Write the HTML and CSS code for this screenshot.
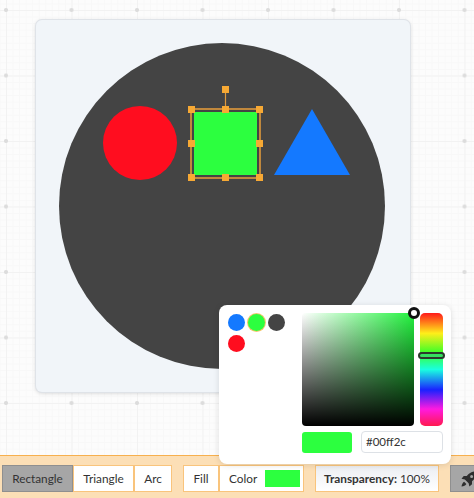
FILE: index.html
```html
<!DOCTYPE html>
<html lang="en">
<head>
<meta charset="utf-8">
<title>Shape editor</title>
<link rel="stylesheet" href="styles.css">
</head>
<body>
<main class="stage">
  <section class="card">
    <svg class="art" viewBox="0 0 374 372" width="374" height="372">
      <circle cx="186" cy="186" r="163" fill="#444444"/>
      <circle cx="104" cy="123" r="37" fill="#ff0d1f"/>
      <rect x="158" y="92" width="63" height="63" fill="#2cff3f"/>
      <polygon points="276,89 314,155 238,155" fill="#1479ff"/>
      <g class="handles">
        <rect class="frame" x="155" y="89" width="69" height="69"/>
        <line class="stem" x1="189.500" y1="69" x2="189.500" y2="89"/>
        <rect x="186" y="66" width="7" height="7"/>
        <rect x="152" y="86" width="7" height="7"/>
        <rect x="186" y="86" width="7" height="7"/>
        <rect x="220" y="86" width="7" height="7"/>
        <rect x="152" y="120" width="7" height="7"/>
        <rect x="220" y="120" width="7" height="7"/>
        <rect x="152" y="154" width="7" height="7"/>
        <rect x="186" y="154" width="7" height="7"/>
        <rect x="220" y="154" width="7" height="7"/>
      </g>
    </svg>
  </section>

  <aside class="popover">
    <div class="swatches">
      <span class="dot dot-blue"></span>
      <span class="dot dot-green"></span>
      <span class="dot dot-dark"></span>
      <span class="dot dot-red"></span>
    </div>
    <div class="picker">
      <div class="pick-top">
        <div class="sat"><span class="sat-thumb"></span></div>
        <div class="hue"><span class="hue-thumb"></span></div>
      </div>
      <div class="pick-bottom">
        <span class="current"></span>
        <span class="hex">#00ff2c</span>
      </div>
    </div>
  </aside>

  <footer class="toolbar">
    <div class="group group-shapes">
      <button class="btn btn-active btn-rect">Rectangle</button>
      <button class="btn btn-tri">Triangle</button>
      <button class="btn btn-arc">Arc</button>
    </div>
    <div class="group group-fill">
      <button class="btn btn-fill">Fill</button>
      <button class="btn btn-color">Color <span class="chip"></span></button>
    </div>
    <button class="btn btn-trans"><b>Transparency:</b> 100%</button>
    <button class="btn btn-rocket" aria-label="Launch">
      <svg viewBox="0 0 24 24" width="18" height="18"><path d="M22 2c-5-.5-9.500 1.500-13 6H5L2 11.500l4.500 1L11.500 17.500l1 4.500L16 19v-4c4.500-3.500 6.500-8 6-13zM15.500 6.500a2 2 0 1 1 0 4 2 2 0 0 1 0-4zM5.500 15.500C3.500 16.500 2.500 19 2 22c3-.5 5.500-1.500 6.500-3.500z" fill="#2e2e2e"/></svg>
    </button>
  </footer>
</main>
</body>
</html>
```
FILE: styles.css
```css
* { box-sizing: border-box; }
html, body { margin: 0; height: 100%; }
body { font-family: Lato, "Liberation Sans", sans-serif; color: #333; overflow: hidden; }

.stage {
  position: relative;
  width: 474px;
  height: 498px;
  overflow: hidden;
  display: flex;
  flex-direction: column;
  background-color: #fcfcfc;
  background-image:
    radial-gradient(circle, #dcdcdc 1.500px, transparent 2.500px),
    linear-gradient(#f2f2f2 1px, transparent 1px),
    linear-gradient(90deg, #f2f2f2 1px, transparent 1px),
    linear-gradient(#f8f8f8 1px, transparent 1px),
    linear-gradient(90deg, #f8f8f8 1px, transparent 1px);
  background-size: 65.500px 65.500px, 65.500px 65.500px, 65.500px 65.500px, 6.550px 6.550px, 6.550px 6.550px;
  background-position: -26.750px -22.750px, 6px 10px, 6px 10px, 6px 10px, 6px 10px;
}

.card {
  width: 374px;
  height: 372px;
  margin: 20px 0 0 36px;
  background: #f1f5f9;
  border-radius: 6px;
  box-shadow: 0 0 0 1px #dfe3e8, 0 1px 4px rgba(0, 0, 0, .18);
}
.art { display: block; }
.handles rect { fill: #f7a934; }
.handles .frame { fill: none; stroke: #e09a3c; stroke-width: 1.600; }
.handles .stem { stroke: #e09a3c; stroke-width: 1.200; }

.popover {
  position: absolute;
  left: 219px;
  top: 305px;
  width: 232px;
  height: 159px;
  padding: 8px 8px 11px 9px;
  display: flex;
  background: #fff;
  border-radius: 8px;
  box-shadow: 0 1px 6px rgba(0, 0, 0, .12);
  z-index: 2;
}
.swatches {
  width: 74px;
  display: flex;
  flex-wrap: wrap;
  align-content: flex-start;
  column-gap: 3px;
  row-gap: 3px;
}
.dot { width: 17px; height: 17px; border-radius: 50%; margin-top: 1px; }
.dot-blue { background: #1479ff; }
.dot-green { background: #2cff3f; box-shadow: 0 0 0 1px #f4c66c; }
.dot-dark { background: #444; }
.dot-red { background: #ff0d1f; }

.picker { flex: 1; display: flex; flex-direction: column; gap: 5px; }
.pick-top { display: flex; gap: 6px; height: 113px; }
.sat {
  position: relative;
  width: 112px;
  border-radius: 4px;
  background:
    linear-gradient(to top, #000, transparent),
    linear-gradient(to right, #fff, #22f23e);
}
.sat-thumb {
  position: absolute;
  right: -6px;
  top: -6px;
  width: 12px;
  height: 12px;
  border: 3px solid #111;
  background: #fff;
  border-radius: 50%;
}
.hue {
  position: relative;
  width: 23px;
  border-radius: 5px;
  background: linear-gradient(to bottom, #ff1a1a 0%, #ffee1a 18%, #3cff28 35%, #1affe0 50%, #1a22ff 68%, #ff1ae0 85%, #ff1a50 100%);
}
.hue-thumb {
  position: absolute;
  left: -2px;
  right: -2px;
  top: 39px;
  height: 7px;
  border: 2px solid #2d3a2d;
  border-radius: 4px;
  background: #35e060;
}
.pick-bottom { display: flex; gap: 9px; }
.current { width: 50px; height: 21px; margin-top: 1px; background: #2cff3f; border-radius: 3px; }
.hex {
  width: 82px;
  height: 22px;
  padding: 0 0 0 4px;
  border: 1px solid #dde1e6;
  border-radius: 4px;
  font-size: 11.500px;
  line-height: 20px;
  color: #333;
}

.toolbar {
  position: absolute;
  left: 0;
  right: 0;
  bottom: 0;
  height: 43px;
  padding: 9px 0 5px 2px;
  display: flex;
  background: #fcdfb6;
  border-top: 1.500px solid #f7b04e;
}
.group { display: flex; }
.btn {
  height: 27px;
  padding: 0;
  border: 1px solid #f9c47c;
  background: #fff;
  font: 11.800px Lato, "Liberation Sans", sans-serif;
  color: #333;
  display: flex;
  align-items: center;
  justify-content: center;
  flex-shrink: 0;
}
.btn-active { background: #a6a6a6; border-color: #8f8f8f; }
.btn-rect { width: 71px; }
.btn-tri { width: 61px; }
.btn-arc { width: 38px; }
.group-fill { margin-left: 11px; }
.btn-fill { width: 36px; }
.btn-color { width: 85px; gap: 8px; justify-content: flex-start; padding-left: 9px; }
.chip { width: 35px; height: 17px; background: #2cff3f; }
.btn-trans { width: 124px; margin-left: 11px; background: linear-gradient(#eceef2, #fff); }
.btn-trans b { font-weight: 700; margin-right: 3px; }
.btn-rocket { width: 40px; margin-left: 11px; background: #a6a6a6; border-color: #8f8f8f; justify-content: flex-start; padding-left: 9px; }
```
